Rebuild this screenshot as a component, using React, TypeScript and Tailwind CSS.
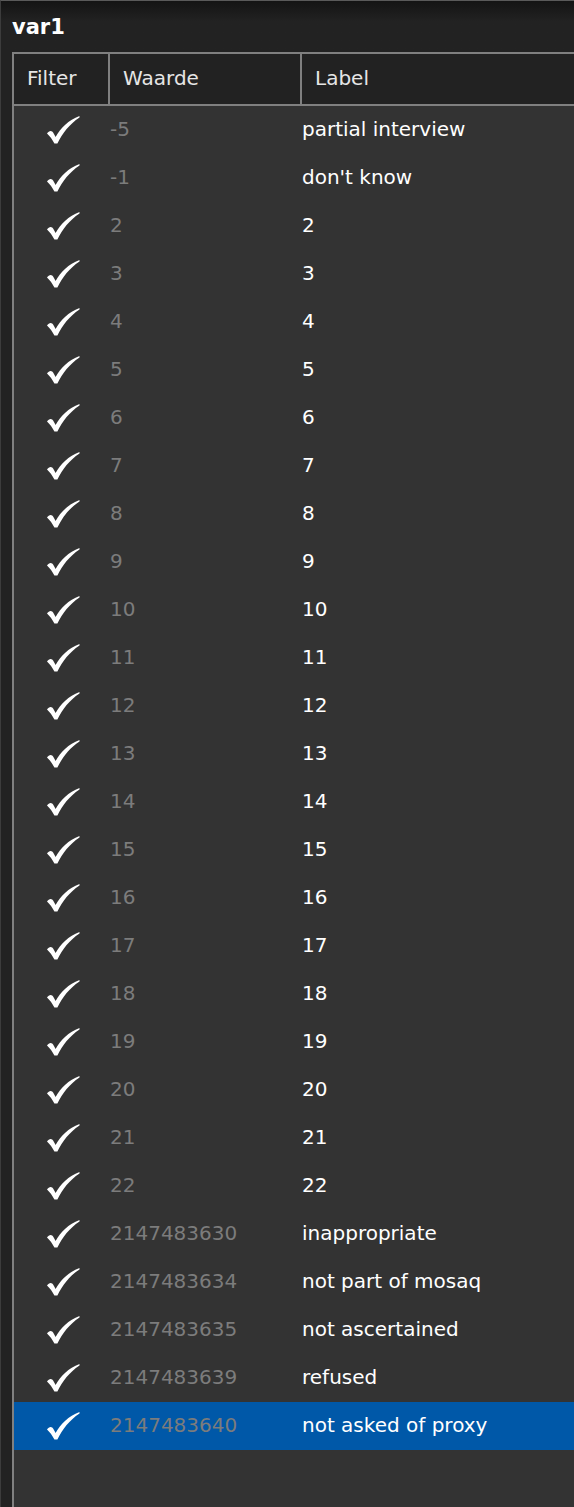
const rows: [string, string][] = [
  ["-5", "partial interview"],
  ["-1", "don't know"],
  ...Array.from({ length: 21 }, (_, i): [string, string] => [String(i + 2), String(i + 2)]),
  ["2147483630", "inappropriate"],
  ["2147483634", "not part of mosaq"],
  ["2147483635", "not ascertained"],
  ["2147483639", "refused"],
  ["2147483640", "not asked of proxy"],
];

const Check = () => (
  <svg width="33" height="28" viewBox="0 0 33 28" className="block">
    <path
      d="M0 17.5 C1.5 15.3 3.6 14.4 5.2 15.6 C6.4 16.8 7.6 19 8.6 21 C13.5 12 21.5 4.2 32.5 0 L32.5 1.4 C22.5 8 15.5 17 10.4 27.6 L7.4 27.6 C5.4 23.6 3 20.2 0 17.5 Z"
      fill="#ffffff"
    />
  </svg>
);

export default function App() {
  return (
    <div
      className="w-[574px] h-[1507px] flex flex-col bg-[#222222] border-t border-t-[#5a5a5a] border-l border-l-[#3c3c3c] overflow-hidden"
      style={{ fontFamily: '"DejaVu Sans", sans-serif' }}
    >
      <div className="h-[51px] shrink-0 bg-gradient-to-b from-[#141414] to-[#222222] to-40% pl-[11px] pt-[16px] text-white font-bold text-[21px] leading-none">
        var1
      </div>
      <div className="flex-1 ml-[11px] flex flex-col border-l-2 border-t-2 border-[#808080] bg-[#333333]">
        <div className="flex h-[52px] shrink-0 bg-[#222222] border-b-2 border-[#808080] text-[#e6e6e6] text-[20px]">
          <div className="w-[96px] shrink-0 flex items-center pl-[13px] pb-[3px] border-r-2 border-[#808080]">Filter</div>
          <div className="w-[192px] shrink-0 flex items-center pl-[13px] pb-[3px] border-r-2 border-[#808080]">Waarde</div>
          <div className="flex-1 flex items-center pl-[13px] pb-[3px]">Label</div>
        </div>
        {rows.map(([v, l], i) => (
          <div
            key={i}
            className={`flex h-[48px] shrink-0 items-center text-[20px] ${i === rows.length - 1 ? "bg-[#0058a8]" : ""}`}
          >
            <div className="w-[96px] shrink-0 flex justify-center pl-[2px]">
              <Check />
            </div>
            <div className="w-[192px] shrink-0 text-[#7c7c7c] pb-[2px]">{v}</div>
            <div className="flex-1 text-white pb-[2px]">{l}</div>
          </div>
        ))}
      </div>
    </div>
  );
}
